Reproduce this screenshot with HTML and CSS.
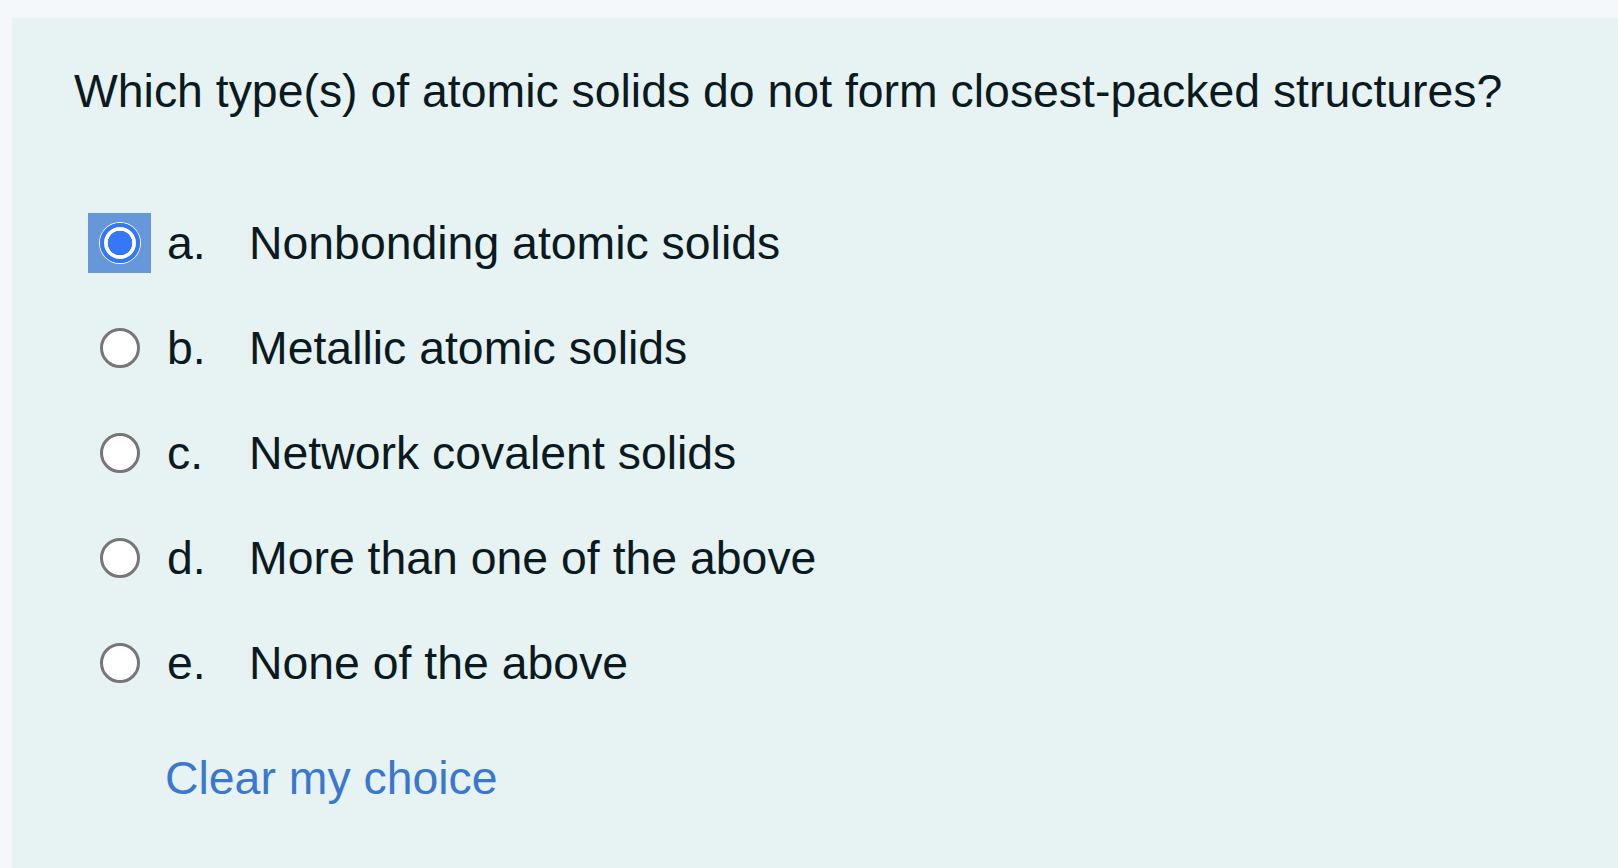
FILE: index.html
```html
<!DOCTYPE html>
<html lang="en">
<head>
    <meta charset="UTF-8">
    <meta name="viewport" content="width=device-width, initial-scale=1.0">
    <title>Question</title>
    <link rel="stylesheet" href="styles.css">
</head>
<body>
    <div class="page">
        <div class="que">
            <div class="qtext">Which type(s) of atomic solids do not form closest-packed structures?</div>
            <div class="answer">
                <div class="option">
                    <span class="radio-wrap focused"><input type="radio" name="q1" id="q1a" checked></span>
                    <label for="q1a"><span class="letter">a.</span>Nonbonding atomic solids</label>
                </div>
                <div class="option">
                    <span class="radio-wrap"><input type="radio" name="q1" id="q1b"></span>
                    <label for="q1b"><span class="letter">b.</span>Metallic atomic solids</label>
                </div>
                <div class="option">
                    <span class="radio-wrap"><input type="radio" name="q1" id="q1c"></span>
                    <label for="q1c"><span class="letter">c.</span>Network covalent solids</label>
                </div>
                <div class="option">
                    <span class="radio-wrap"><input type="radio" name="q1" id="q1d"></span>
                    <label for="q1d"><span class="letter">d.</span>More than one of the above</label>
                </div>
                <div class="option">
                    <span class="radio-wrap"><input type="radio" name="q1" id="q1e"></span>
                    <label for="q1e"><span class="letter">e.</span>None of the above</label>
                </div>
            </div>
            <a class="clear" href="#">Clear my choice</a>
        </div>
    </div>
</body>
</html>
```

FILE: styles.css
```css
* {
    box-sizing: border-box;
    margin: 0;
    padding: 0;
}

html, body {
    height: 100%;
}

body {
    font-family: 'Liberation Sans', Arial, sans-serif;
    color: #0b1a1f;
    background: #f4f8fb;
    overflow: hidden;
}

.page {
    height: 100%;
    padding: 18px 0 0 12px;
}

.que {
    height: 100%;
    background: #e7f2f3;
    padding: 43px 0 0 62px;
}

.qtext {
    font-size: 46.4px;
    line-height: 60px;
}

.answer {
    margin-top: 69px;
    padding-left: 14px;
}

.option {
    display: flex;
    align-items: center;
    height: 105px;
    font-size: 46.4px;
}

.radio-wrap {
    display: flex;
    align-items: center;
    justify-content: center;
    width: 63px;
    height: 60px;
    margin-right: 16px;
}

.radio-wrap.focused {
    background: #6597d9;
}

input[type="radio"] {
    appearance: none;
    -webkit-appearance: none;
    width: 40px;
    height: 40px;
    border-radius: 50%;
    border: 3px solid #767676;
    background: #fff;
}

input[type="radio"]:checked {
    border: 4px solid #3478f6;
    background: radial-gradient(circle, #3478f6 0 12px, #fff 12.5px);
    box-shadow: 0 0 0 1px #fff;
}

label {
    display: flex;
}

.letter {
    width: 82px;
}

.clear {
    display: inline-block;
    margin-top: 36px;
    margin-left: 91px;
    font-size: 46.4px;
    color: #3a78cf;
    text-decoration: none;
}
```
